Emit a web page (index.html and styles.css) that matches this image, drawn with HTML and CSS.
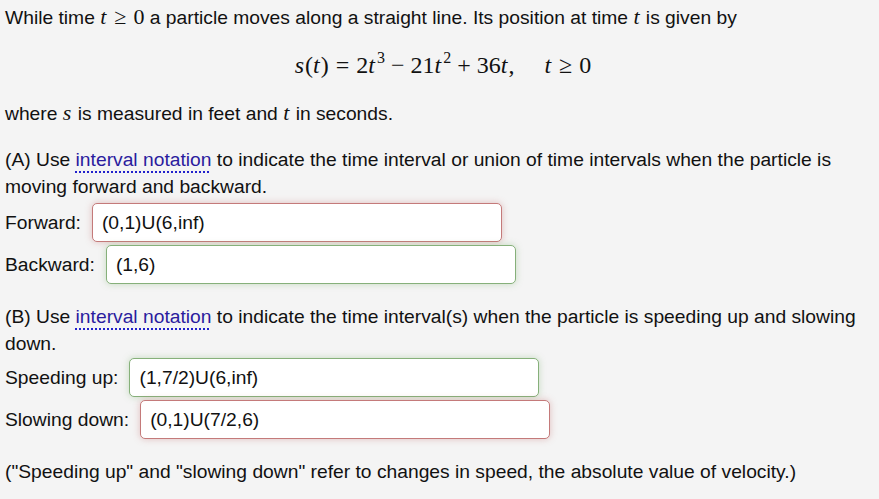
FILE: index.html
```html
<!DOCTYPE html>
<html>
<head>
<meta charset="utf-8">
<link rel="stylesheet" href="styles.css">
</head>
<body>
<div class="page">
  <p class="line first">While time <span class="m"><i>t</i><span class="rel">≥</span>0</span> a particle moves along a straight line. Its position at time <span class="m"><i>t</i></span> is given by</p>
  <div class="eq"><span class="m big"><i>s</i>(<i>t</i>)<span class="rel">=</span>2<i>t</i><sup>3</sup><span class="bin">−</span>21<i>t</i><sup>2</sup><span class="bin">+</span>36<i>t</i>,<span class="sp"></span><i>t</i><span class="rel">≥</span>0</span></div>
  <p class="line">where <span class="m"><i>s</i></span> is measured in feet and <span class="m"><i>t</i></span> in seconds.</p>

  <p class="line section">(A) Use <span class="link">interval notation</span> to indicate the time interval or union of time intervals when the particle is moving forward and backward.</p>
  <div class="row first-row"><span class="label">Forward:</span><div class="ans wrong">(0,1)U(6,inf)</div></div>
  <div class="row"><span class="label">Backward:</span><div class="ans right">(1,6)</div></div>

  <p class="line section">(B) Use <span class="link">interval notation</span> to indicate the time interval(s) when the particle is speeding up and slowing down.</p>
  <div class="row first-row b"><span class="label">Speeding up:</span><div class="ans right">(1,7/2)U(6,inf)</div></div>
  <div class="row"><span class="label">Slowing down:</span><div class="ans wrong">(0,1)U(7/2,6)</div></div>

  <p class="line section">("Speeding up" and "slowing down" refer to changes in speed, the absolute value of velocity.)</p>
</div>
</body>
</html>
```
FILE: styles.css
```css
html, body {
  margin: 0;
  padding: 0;
  background: #f4f4f4;
}
body {
  font-family: "Liberation Sans", Arial, sans-serif;
  font-size: 19.25px;
  color: #111;
}
.page {
  padding: 4px 0 0 5px;
  width: 868px;
}
.line {
  margin: 0;
  line-height: 27px;
}
.section {
  margin-top: 19px;
}
.m {
  font-family: "Liberation Serif", "Times New Roman", serif;
  font-size: 22px;
  line-height: 1;
}
.m i {
  font-style: italic;
  padding-right: 1px;
}
.m.big {
  font-size: 24px;
}
.m sup {
  font-size: 16px;
  line-height: 0;
  vertical-align: 10px;
  margin-left: 1px;
}
.rel {
  margin: 0 7px;
}
.bin {
  margin: 0 6px;
}
.eq {
  height: 36px;
  margin: 18px 0 15px;
  text-align: center;
  line-height: 36px;
  padding-left: 8px;
}
.sp {
  display: inline-block;
  width: 30px;
}
.link {
  color: #2b1c9e;
  text-decoration: underline dotted #2222cc;
  text-decoration-thickness: 2px;
  text-underline-offset: 5px;
}
.row {
  display: flex;
  align-items: center;
  margin-top: 3px;
}
.first-row {
  margin-top: 3px;
}
.first-row.b {
  margin-top: 1px;
}
.label {
  margin-right: 11px;
}
.ans {
  box-sizing: border-box;
  width: 410px;
  height: 39px;
  line-height: 37px;
  padding-left: 9px;
  background: #fff;
  border: 1px solid #ccc;
  border-radius: 5px;
}
.ans.wrong {
  border-color: #c47a7a;
  box-shadow: 0 0 7px rgba(190, 90, 90, 0.35);
}
.ans.right {
  border-color: #86b07a;
  box-shadow: 0 0 7px rgba(110, 170, 95, 0.35);
}
```
